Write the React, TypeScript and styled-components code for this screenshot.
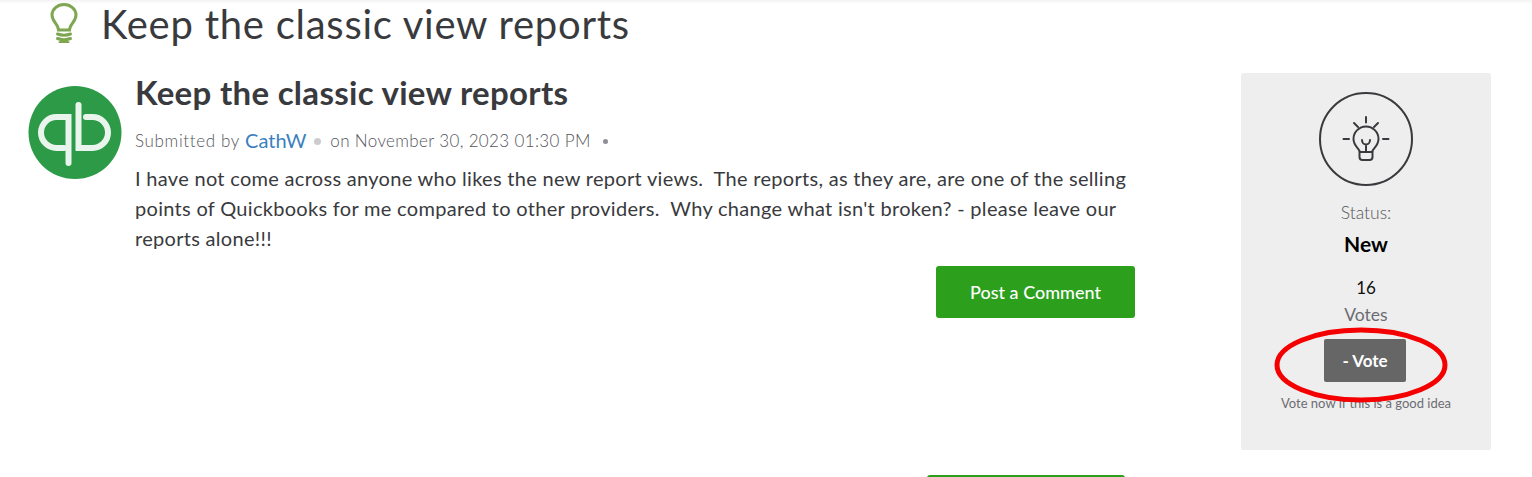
import React from "react";
import styled, { createGlobalStyle } from "styled-components";

const Global = createGlobalStyle`
  html, body { margin: 0; padding: 0; background: #fff; }
  body { font-family: Lato, "Open Sans", "Liberation Sans", sans-serif; color: #393a3d; overflow: hidden; }
`;

const Page = styled.div`
  width: 1532px;
  height: 477px;
  overflow: hidden;
  background: linear-gradient(#f3f3f3, #fff 4px);
`;

const Header = styled.header`
  display: flex;
  align-items: flex-start;
  height: 50px;
  padding-left: 49px;
  gap: 22px;
`;

const HeaderIcon = styled.svg`
  flex: none;
  margin-top: 3px;
`;

const HeaderTitle = styled.h1`
  margin: 0;
  font-size: 40px;
  font-weight: 400;
  line-height: 48px;
  letter-spacing: 0.75px;
  color: #393a3d;
`;

const Body = styled.div`
  display: flex;
  padding: 23px 41px 0 28px;
`;

const Avatar = styled.svg`
  flex: none;
  width: 94px;
  height: 94px;
  margin-top: 13px;
`;

const Main = styled.main`
  flex: none;
  width: 1000px;
  margin-left: 13px;
`;

const PostTitle = styled.h2`
  margin: -1px 0 0;
  font-size: 33px;
  font-weight: 700;
  line-height: 40px;
  letter-spacing: 0.3px;
  color: #393a3d;
`;

const Meta = styled.div`
  display: flex;
  align-items: center;
  margin-top: 16px;
  height: 24px;
  font-size: 17px;
  font-weight: 300;
  letter-spacing: 0.35px;
  color: #55565b;
`;

const Submitted = styled.span`
  letter-spacing: 0.65px;
`;

const Author = styled.a`
  margin-left: 5px;
  font-size: 20px;
  font-weight: 400;
  letter-spacing: 0;
  color: #3b7fc0;
`;

const Dot = styled.span<{ $color: string; $size: number; $left: number }>`
  width: ${(p) => p.$size}px;
  height: ${(p) => p.$size}px;
  margin: 3px 0 0 ${(p) => p.$left}px;
  border-radius: 50%;
  background: ${(p) => p.$color};
`;

const DateText = styled.span`
  margin-left: 9px;
`;

const Description = styled.p`
  margin: 11px 0 0;
  width: 1000px;
  font-size: 20px;
  line-height: 30px;
  letter-spacing: 0.3px;
  color: #393a3d;
  white-space: pre-wrap;
`;

const Actions = styled.div`
  display: flex;
  justify-content: flex-end;
`;

const GreenButton = styled.button`
  width: 199px;
  height: 52px;
  margin-top: 13px;
  border: 0;
  border-radius: 3px;
  background: #2ca01c;
  color: #fff;
  font: 500 18px Lato, sans-serif;
`;

const SecondAction = styled.div`
  width: 198px;
  height: 52px;
  margin: 157px 0 0 792px;
  border-radius: 3px;
  background: #2ca01c;
`;

const Side = styled.aside`
  position: relative;
  flex: none;
  box-sizing: border-box;
  width: 250px;
  height: 377px;
  margin-left: 106px;
  padding-top: 19px;
  border-radius: 2px;
  background: #eeeeee;
  display: flex;
  flex-direction: column;
  align-items: center;
  text-align: center;
`;

const StatusIcon = styled.svg`
  width: 96px;
  height: 96px;
`;

const StatusLabel = styled.div`
  margin-top: 15px;
  font-size: 17.5px;
  font-weight: 300;
  line-height: 20px;
  color: #55565b;
`;

const StatusValue = styled.div`
  margin-top: 9px;
  font-size: 21px;
  font-weight: 700;
  line-height: 24px;
  color: #000;
`;

const Count = styled.div`
  margin-top: 21px;
  font-size: 17px;
  line-height: 22px;
  color: #111;
`;

const VotesLabel = styled.div`
  margin-top: 5px;
  font-size: 17.5px;
  line-height: 22px;
  color: #6b6c72;
`;

const VoteButton = styled.button`
  width: 82px;
  height: 43px;
  margin: 13px 2px 0 0;
  border: 0;
  border-radius: 2px;
  background: #666666;
  color: #fff;
  font: 700 17px Lato, sans-serif;
`;

const Hint = styled.div`
  margin-top: 13px;
  font-size: 13px;
  line-height: 16px;
  color: #6b6c72;
`;

const Annotation = styled.svg`
  position: absolute;
  left: 32px;
  top: 254px;
  width: 176px;
  height: 80px;
`;

export default function App() {
  return (
    <Page>
      <Global />
      <Header>
        <HeaderIcon width="30" height="40" viewBox="0 0 30 40" fill="none" stroke="#7fa650" strokeWidth="3" strokeLinecap="round">
          <path d="M9.500 27c0-6-6.500-8-6.500-15a12 10.500 0 0 1 24 0c0 7-6.500 9-6.500 15z" />
          <path d="M8.500 31c4 1.500 9 1.500 13 0M8.500 35.500c4 1.500 9 1.500 13 0" />
          <path d="M11 39.500h8" />
        </HeaderIcon>
        <HeaderTitle>Keep the classic view reports</HeaderTitle>
      </Header>
      <Body>
        <Avatar viewBox="0 0 94 94">
          <circle cx="47" cy="46.500" r="46.500" fill="#2d9a47" />
          <g fill="none" stroke="#e9f5ec" strokeWidth="6" strokeLinecap="round">
            <path d="M36 62H28.500a15.500 15.500 0 0 1 0-31H40.500V77" />
            <path d="M58 31h6.500a15.500 15.500 0 0 1 0 31H50.500V19" />
          </g>
        </Avatar>
        <Main>
          <PostTitle>Keep the classic view reports</PostTitle>
          <Meta>
            <Submitted>Submitted by</Submitted>
            <Author>CathW</Author>
            <Dot $color="#cccccc" $size={7} $left={8} />
            <DateText>on November 30, 2023 01:30 PM</DateText>
            <Dot $color="#8d9096" $size={5} $left={12} />
          </Meta>
          <Description>
            I have not come across anyone who likes the new report views.  The reports, as they are, are one of the selling{"\n"}
            points of Quickbooks for me compared to other providers.  Why change what isn't broken? - please leave our{"\n"}
            reports alone!!!
          </Description>
          <Actions>
            <GreenButton>Post a Comment</GreenButton>
          </Actions>
          <SecondAction />
        </Main>
        <Side>
          <StatusIcon viewBox="-0.500 0 96 96" fill="none" stroke="#393a3d">
            <circle cx="47.500" cy="47" r="46" strokeWidth="2" />
            <g strokeWidth="2" strokeLinecap="round">
              <path d="M47.500 25v5.500M35.500 31l4 4M59.500 31l-4 4M25 47h5.500M64.500 47h5.500" />
              <path d="M41.500 60c-1-4-6.500-6-6.500-13a12.500 12.500 0 0 1 25 0c0 7-5.500 9-6.500 13z" />
              <path d="M41 60h13v5a3 3 0 0 1-3 3h-7a3 3 0 0 1-3-3z" />
              <path d="M43.500 48c0 3 2 4.500 4 4.500s4-1.500 4-4.500M47.500 52.500V60" />
            </g>
          </StatusIcon>
          <StatusLabel>Status:</StatusLabel>
          <StatusValue>New</StatusValue>
          <Count>16</Count>
          <VotesLabel>Votes</VotesLabel>
          <VoteButton>- Vote</VoteButton>
          <Hint>Vote now if this is a good idea</Hint>
          <Annotation viewBox="0 0 176 80" fill="none">
            <ellipse cx="88" cy="38" rx="84" ry="35" stroke="#f50000" strokeWidth="5" />
          </Annotation>
        </Side>
      </Body>
    </Page>
  );
}
